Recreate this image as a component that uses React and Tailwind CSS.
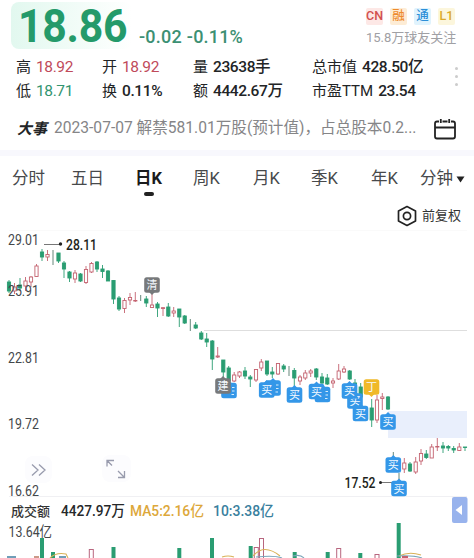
const G = '#2a9d72';
const R = '#c4626f';

// x, high, low, body top, body bottom, direction (u = up, d = down, n = thin line)
const candles = [
  [9, 280, 293, 282, 291, 'd'], [14.5, 283, 294, 287, 291, 'u'], [20, 278, 290, 285, 288, 'd'],
  [25.5, 277, 291, 281, 286, 'u'], [31, 276, 287, 277, 282, 'u'], [36.5, 264, 277, 266, 276.5, 'u'],
  [42, 249, 261, 252, 257, 'd'], [47.5, 250, 261, 254.5, 257, 'u'], [53, 250, 265, 0, 0, 'n'],
  [58.5, 253, 263, 253, 261, 'd'], [64, 261, 278, 263, 269, 'd'], [69.5, 271, 282, 272, 278, 'd'],
  [75, 270, 283, 273, 279, 'u'], [80.5, 273, 282, 274, 281, 'd'], [86, 266, 284, 269.5, 282.5, 'u'],
  [91.5, 262, 273, 263.5, 272, 'u'], [97, 261, 272, 262, 269, 'd'], [102.5, 265, 278, 269, 271.5, 'd'],
  [108, 270, 281, 271, 281, 'd'], [113.5, 280, 304, 280.5, 299, 'd'], [119, 296, 311, 298, 309, 'd'],
  [124.5, 298, 313, 300.5, 308.5, 'u'], [130, 293, 305, 297.5, 300, 'u'], [135.3, 292, 302, 300.5, 301, 'u'],
  [140.7, 295, 301, 0, 0, 'n'], [146.3, 296, 307, 299, 303, 'd'], [152, 293, 308, 305, 307.5, 'u'],
  [157.5, 302, 317, 304, 308, 'd'], [163, 307, 316, 307.7, 308.5, 'u'], [168.3, 303, 317, 307, 316, 'd'],
  [173.7, 307, 317, 311, 313, 'u'], [179.3, 309, 327, 309, 317, 'd'], [184.7, 315, 324, 316, 323, 'd'],
  [190.3, 319, 331, 0, 0, 'n'], [195.7, 322, 329, 325, 328, 'd'], [201.3, 331, 340, 333, 339, 'd'],
  [206.7, 333, 347, 339, 342, 'd'], [212.3, 340, 370, 341, 359, 'd'], [217.7, 347, 358, 356, 357, 'u'],
  [223.3, 360, 377, 360, 372, 'd'], [228.7, 366, 382, 368, 381, 'd'], [234.2, 372, 382, 375, 381, 'u'],
  [239.5, 371, 378, 372, 376, 'u'], [245, 367, 379, 371, 376, 'd'], [250.3, 375, 387, 377, 379, 'd'],
  [256, 369, 382, 369.5, 380, 'u'], [261.3, 359, 371, 362, 368, 'u'], [267, 361, 376, 361, 374, 'd'],
  [272.3, 367, 378, 372, 374, 'd'], [278, 363, 375, 363.5, 374, 'u'], [283.7, 364, 372, 366, 369, 'd'],
  [289, 366, 376, 0, 0, 'n'], [294.3, 368, 386, 370.5, 378, 'd'], [300, 375, 385, 377, 381, 'u'],
  [305.3, 370, 380, 373, 378, 'u'], [310.7, 369, 377, 371, 373, 'u'], [316.3, 368, 380, 369, 377, 'd'],
  [322, 373, 385, 377, 383, 'd'], [327.3, 374, 385, 378, 384, 'd'], [333, 378, 388, 381, 383, 'u'],
  [338.7, 364, 380, 371, 379, 'u'], [344, 366, 373, 369, 372, 'u'], [349.7, 370, 380, 371, 379, 'd'],
  [355, 379, 394, 383, 393, 'd'], [360.7, 383, 398, 387, 397, 'd'], [371.7, 399, 427, 408, 420, 'd'],
  [377, 395, 423, 400, 420, 'u'], [382.3, 393, 410, 397, 398.5, 'u'], [388, 396, 410, 397, 409, 'd'],
  [393.3, 452, 460, 0, 0, 'n'], [399, 473, 482, 0, 0, 'n'], [404.3, 458, 473, 463, 469, 'u'],
  [410, 462, 472, 464, 471, 'd'], [415.7, 457, 474, 462, 472, 'u'], [421, 449, 465, 453.5, 461, 'u'],
  [426.3, 450, 459, 454, 457.5, 'd'], [431.7, 444, 458, 447, 458, 'u'], [437.3, 438, 451, 446.5, 447, 'u'],
  [443, 442, 453, 446, 448, 'd'], [448.3, 445, 451, 446.5, 448, 'd'], [453.7, 446, 453, 448.5, 450, 'd'],
  [459.3, 443, 451, 447, 450.5, 'u'], [465, 447, 451, 447, 447.5, 'd'],
];

// x, top, direction
const volumes = [
  [42, 538, 'd'], [53, 552, 'd'], [91.3, 549.5, 'u'], [113.5, 547, 'd'], [179.3, 548, 'd'],
  [212, 538, 'd'], [250.7, 546, 'd'], [256.3, 547.5, 'u'], [261.5, 538.5, 'u'], [294.7, 552, 'd'],
  [327.7, 552, 'd'], [338.7, 548.5, 'u'], [360.3, 553, 'd'], [377, 554.5, 'u'], [398.7, 523, 'd'],
];

const BLUE = '#3497e8';
const GREY = '#77797b';

// an empty label is a marker mostly covered by the next one
const markers = [
  [152, 285, '清', GREY, 'down'],
  [229, 390.5, '', BLUE, 'up'],
  [223, 386, '建', GREY, 'up'],
  [273, 388, '', BLUE, 'up'],
  [266.7, 390, '买', BLUE, 'up'],
  [294.5, 395, '买', BLUE, 'up'],
  [322.5, 394.5, '', BLUE, 'up'],
  [316.5, 391.5, '买', BLUE, 'up'],
  [355, 401, '买', BLUE, 'up'],
  [349.5, 391, '买', BLUE, 'up'],
  [360.5, 413.5, '买', BLUE, 'up'],
  [371.5, 387, '丁', '#f0b929', 'down'],
  [388, 422, '买', BLUE, 'up'],
  [393.3, 465, '买', BLUE, 'up'],
  [399, 488.5, '买', BLUE, 'up'],
];

const tags = [
  { t: 'CN', c: 'text-[#d2504e] bg-[#fde8e6]' },
  { t: '融', c: 'text-[#ee8b2d] bg-[#fdecd5]' },
  { t: '通', c: 'text-[#2c8fd8] bg-[#e0f3fd]' },
  { t: 'L1', c: 'text-[#dba92c] bg-[#fcf6dc]' },
];

const stats = [
  { w: 'w-[86px]', rows: [['高', '18.92', 'text-[#c04a5a] font-normal'], ['低', '18.71', 'text-[#329470] font-normal']] },
  { w: 'w-[91px]', rows: [['开', '18.92', 'text-[#c04a5a] font-normal'], ['换', '0.11%', 'font-medium']] },
  { w: 'w-[119px]', rows: [['量', '23638手', 'font-medium'], ['额', '4442.67万', 'font-medium']] },
  { w: 'w-[130px]', rows: [['总市值', '428.50亿', 'font-medium'], ['市盈TTM', '23.54', 'font-medium']] },
];

const tabs = [
  ['分时', 'w-[59px]'], ['五日', 'w-[63px]'], ['日K', 'w-[59px]'], ['周K', 'w-[60px]'],
  ['月K', 'w-[58px]'], ['季K', 'w-[60px]'], ['年K', 'w-[49px]'],
];

function Candle({ c: [x, hi, lo, top, bot, dir] }) {
  if (dir === 'n') return <path d={`M${x} ${hi}V${lo}`} stroke="#66877b" strokeWidth="1" />;
  const color = dir === 'u' ? R : G;
  return (
    <g stroke={color} strokeWidth="0.9">
      <path d={`M${x} ${hi}V${lo}`} />
      <rect x={x - 1.6} y={top} width="3.2" height={bot - top} fill={dir === 'u' ? '#fff' : G} />
    </g>
  );
}

function Marker({ m: [x, y, label, color, dir] }) {
  return (
    <g>
      <path d={dir === 'up' ? `M${x - 3} ${y - 7}l3-3 3 3z` : `M${x - 3} ${y + 7}l3 3 3-3z`} fill={color} />
      <rect x={x - 7.8} y={y - 7.8} width="15.6" height="15.6" rx="2.5" fill={color} />
      {label
        ? <text x={x} y={y + 4} fontSize="11" textAnchor="middle" fill="#f4faff">{label}</text>
        : <path d={`M${x + 3} ${y - 3}h2.500M${x + 3} ${y + 0.500}h2.500M${x + 2.500} ${y + 4}h2.500`} stroke="#d5ecfd" />}
    </g>
  );
}

function Num({ x, y, w, size = 15, children, ...rest }) {
  return <text x={x} y={y} fontSize={size} textLength={w} lengthAdjust="spacingAndGlyphs" {...rest}>{children}</text>;
}

function Chart() {
  return (
    <svg className="block w-[474px] h-[329px]" viewBox="0 229 474 329" fill="none">
      <path d="M9 230.5H467" stroke="#fafafa" />
      <path d="M204 330.5H467" stroke="#dedede" />
      <path d="M9 496.5H467" stroke="#f0f0f3" />
      <rect x="388" y="411" width="79" height="27" fill="#e9effc" />

      {candles.map((c) => <Candle key={c[0]} c={c} />)}

      <g fill="#44474a">
        <Num x="8" y="244.5" w="31">29.01</Num>
        <Num x="8" y="295.5" w="31">25.91</Num>
        <Num x="8" y="362.5" w="31">22.81</Num>
        <Num x="8" y="429" w="31">19.72</Num>
        <Num x="8" y="496" w="31">16.62</Num>
      </g>

      <path d="M44 244.5H60M380 482.5H392" stroke="#777" />
      <circle cx="60.5" cy="244" r="1.7" fill="#222" />
      <circle cx="380.5" cy="482.5" r="1.5" fill="#222" />
      <g fill="#1d1f20" fontWeight="500">
        <Num x="66" y="249.5" w="31">28.11</Num>
        <Num x="344.5" y="488" w="31">17.52</Num>
      </g>

      {markers.map((m) => <Marker key={m[0]} m={m} />)}

      {/* expand controls */}
      <rect x="25" y="456" width="27" height="27" rx="8" fill="#fcfcfe" />
      <rect x="102" y="455" width="29" height="27" rx="8" fill="#fcfcfe" />
      <path
        d="M32 464.5l6 5.5-6 5.5M39 464.5l6 5.5-6 5.5M107 466.500V460.500H114M107 460.500l5 5M118 471l6.500 6.500M124.500 471V477.500H118"
        stroke="#989bad"
        strokeWidth="1.3"
      />

      {/* turnover */}
      <g fontWeight="500">
        <Num x="11" y="515.5" w="39" size="13" fill="#333">成交额</Num>
        <Num x="61" y="515.5" w="64" size="14.500" fill="#26282a">4427.97万</Num>
        <Num x="130" y="515.5" w="74" size="14.500" fill="#dda83a">MA5:2.16亿</Num>
        <Num x="213" y="515.5" w="61" size="14.500" fill="#397f9e">10:3.38亿</Num>
      </g>
      <Num x="8.5" y="536.5" w="43.5" size="14.500" fill="#44474a">13.64亿</Num>

      {volumes.map(([x, y, d]) => (
        <rect key={x} x={x - 2} y={y} width="4" height={560 - y} fill={d === 'u' ? '#fff' : G} stroke={d === 'u' ? '#b8667f' : 'none'} />
      ))}
      <g strokeWidth="1.1">
        <path d="M7 557H16M59 557H66" stroke="#6f9eb8" strokeWidth="2" />
        <path d="M34 557H39" stroke="#c98" strokeWidth="2" />
        <path d="M50 558Q56 552 66 554L68 558M222 557Q228 555 234 557M253 556Q264 543 280 556M399 556Q409 551 421 555" stroke="#d9b257" />
        <path d="M256 557Q275 555 282 558M293 556Q300 554 304 558M397 556Q413 555 422 558" stroke="#7ba6ba" />
        <path d="M402 557H408" stroke="#c4626f" strokeWidth="2" />
      </g>

      <rect x="452" y="497" width="15.5" height="26" rx="2" fill="#98b3ed" />
      <path d="M455.5 510l6.5-5v10z" fill="#fff" />
    </svg>
  );
}

export default function App() {
  return (
    <div className="w-[474px] h-[558px] overflow-hidden bg-white font-[Roboto,'Noto_Sans_CJK_SC',sans-serif] text-[#222426]">
      <header className="h-[150px]">
        <div className="flex h-[54px] pl-[11px]">
          <div className="mt-[2px] h-[47px] w-[121px] rounded-lg bg-linear-to-r from-[#e2f8ef] to-white pl-[7px]">
            <div className="origin-left scale-x-92 text-[46.5px] leading-[49px] font-bold tracking-[-0.3px] text-[#249a6a]">18.86</div>
          </div>
          <div className="mt-[25px] flex gap-[5px] pl-[7px] text-[18px] leading-[24px] font-medium tracking-[0.2px] text-[#3c9073]">
            <span>-0.02</span>
            <span>-0.11%</span>
          </div>
          <div className="ml-auto flex w-[108px] flex-col pt-[8px]">
            <div className="flex gap-[7px]">
              {tags.map(({ t, c }) => (
                <span key={t} className={`flex h-[17px] w-[17px] items-center justify-center rounded-xs text-[12.5px] leading-none font-medium ${c}`}>{t}</span>
              ))}
            </div>
            <div className="mt-[4px] text-[13px] leading-[18px] whitespace-nowrap text-[#a0a0a4]">15.8万球友关注</div>
          </div>
        </div>
        <div className="flex pt-[1px] pl-[16px] text-[15px]">
          {stats.map(({ w, rows }) => (
            <div key={w} className={`${w} shrink-0`}>
              {rows.map(([k, v, c]) => (
                <div key={k} className="flex h-[24px] items-center gap-[5px] leading-[24px] whitespace-nowrap">
                  <span>{k}</span>
                  <span className={`text-[15.5px] tracking-[-0.4px] ${c}`}>{v}</span>
                </div>
              ))}
            </div>
          ))}
          <div className="flex flex-col gap-[5px] pt-[12px] pl-[13px]">
            <i className="size-[3px] rounded-full bg-[#ccc]" />
            <i className="size-[3px] rounded-full bg-[#ccc]" />
            <i className="size-[3px] rounded-full bg-[#ccc]" />
          </div>
        </div>
        <div className="mt-[14px] flex h-[24px] items-center pl-[17px]">
          <span className="w-[37px] text-[15px] font-bold italic">大事</span>
          <span className="w-[366px] text-[15.6px] whitespace-nowrap text-[#858587]">2023-07-07 解禁581.01万股(预计值)，占总股本0.2...</span>
          <svg className="ml-[14px] h-[22px] w-[22px]" viewBox="0 0 22 22" fill="none" stroke="#222" strokeWidth="1.8">
            <path d="M5 3.5H3Q1 3.5 1 5.5V18.5Q1 20.5 3 20.5H19Q21 20.5 21 18.5V5.5Q21 3.5 19 3.5H17M8.5 3.5H13.5M1 9.5H21M6.8 1V5M15.2 1V5" />
          </svg>
        </div>
      </header>

      <div className="h-[6px] bg-[#f8f8fd]" />

      <nav className="flex h-[46px] pt-[10px] pl-[12px] text-[16.5px] leading-[26px] text-[#47494b]">
        {tabs.map(([t, w]) => (
          <div key={t} className={`${w} shrink-0`}>
            {t === '日K' ? (
              <div className="flex w-[29px] flex-col items-center font-bold whitespace-nowrap text-[#1a1b1c]">
                {t}
                <i className="h-[4px] w-[10px] rounded-full bg-[#222]" />
              </div>
            ) : t}
          </div>
        ))}
        <div className="flex items-center gap-[3px] self-start whitespace-nowrap">
          <span>分钟</span>
          <svg className="h-[7px] w-[9px]" viewBox="0 0 9 7"><path d="M0.5 0.5h8L4.5 6.5z" fill="#222" /></svg>
        </div>
      </nav>

      <div className="flex h-[27px] items-center gap-[5px] pl-[397px]">
        <svg className="h-[22px] w-[20px] shrink-0" viewBox="0 0 20 22" fill="none" stroke="#222" strokeWidth="1.7">
          <path d="M10 1.5L18.5 6V16L10 20.5L1.5 16V6z" strokeLinejoin="round" />
          <circle cx="10" cy="11" r="3.6" />
        </svg>
        <span className="text-[13px] whitespace-nowrap text-[#333]">前复权</span>
      </div>

      <Chart />
    </div>
  );
}
